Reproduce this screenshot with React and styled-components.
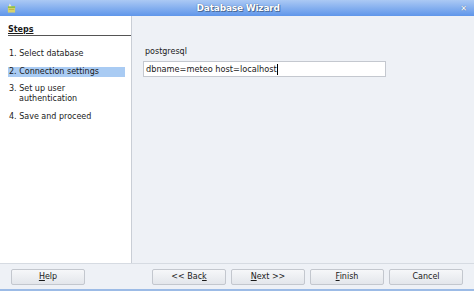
import React from 'react';
import styled, { createGlobalStyle } from 'styled-components';

const GlobalStyle = createGlobalStyle`
  html, body {
    margin: 0;
    padding: 0;
    background: #eef1f6;
  }
  * {
    box-sizing: border-box;
  }
`;

const steps = [
  { id: 1, label: '1. Select database' },
  { id: 2, label: '2. Connection settings', active: true },
  { id: 3, label: '3. Set up user', more: 'authentication' },
  { id: 4, label: '4. Save and proceed' },
];

const App = () => {
  return (
    <>
      <GlobalStyle />
      <StWindow>
        <StTitleBar>
          <StAppIcon viewBox="0 0 10 11">
            <rect x="1" y="3" width="8" height="7" fill="#d9d36a" />
            <rect x="1" y="3" width="8" height="2" fill="#8fbf4a" />
            <path d="M3 0 L5 3 L2 3 Z" fill="#f4f0d0" />
            <rect x="2" y="6" width="6" height="1" fill="#b9b24a" />
          </StAppIcon>
          <StTitle>Database Wizard</StTitle>
          <StClose>✕</StClose>
        </StTitleBar>

        <StMain>
          <StSteps>
            <StStepsHead>Steps</StStepsHead>
            <StStepList>
              {steps.map(step => (
                <StStep key={step.id} $active={step.active}>
                  {step.label}
                  {step.more && <StStepMore>{step.more}</StStepMore>}
                </StStep>
              ))}
            </StStepList>
          </StSteps>

          <StPage>
            <StLabel>postgresql</StLabel>
            <StInput>
              dbname=meteo host=localhost
              <StCaret />
            </StInput>
          </StPage>
        </StMain>

        <StFooter>
          <StButton>
            <u>H</u>elp
          </StButton>
          <StButtonGroup>
            <StButton>
              &lt;&lt; Bac<u>k</u>
            </StButton>
            <StButton>
              <u>N</u>ext &gt;&gt;
            </StButton>
            <StButton>
              <u>F</u>inish
            </StButton>
            <StButton>Cancel</StButton>
          </StButtonGroup>
        </StFooter>
      </StWindow>
    </>
  );
};

export default App;

const StWindow = styled.div`
  width: 474px;
  height: 291px;
  display: flex;
  flex-direction: column;
  background: #eef1f6;
  font-family: 'DejaVu Sans', sans-serif;
  font-size: 8px;
  color: #1a1a1a;
  border-bottom: 2px solid #9cbbe6;
`;

const StTitleBar = styled.div`
  height: 16px;
  flex: none;
  display: flex;
  align-items: center;
  padding: 0 7px 0 7px;
  background: linear-gradient(#abc9f4, #5f96ea);
`;

const StAppIcon = styled.svg`
  width: 9px;
  height: 11px;
`;

const StTitle = styled.div`
  flex: 1;
  text-align: center;
  font-weight: bold;
  font-size: 9px;
  letter-spacing: -0.2px;
  color: #ffffff;
  text-shadow: 0 0 1px #33507a, 1px 1px 0 #4d6f9e;
`;

const StClose = styled.div`
  color: #ffffff;
  font-size: 8px;
  font-weight: bold;
  text-shadow: 0 0 1px #33507a;
`;

const StMain = styled.div`
  flex: 1;
  display: flex;
  border-bottom: 1px solid #d6dbe2;
`;

const StSteps = styled.div`
  width: 132px;
  flex: none;
  background: #ffffff;
  border-right: 1px solid #c9ced6;
  padding: 9px 0 0 8px;
`;

const StStepsHead = styled.div`
  font-weight: bold;
  text-decoration: underline;
  border-bottom: 1px solid #555555;
  line-height: 10px;
  margin-bottom: 13px;
`;

const StStepList = styled.div`
  display: flex;
  flex-direction: column;
  gap: 7.5px;
`;

const StStep = styled.div`
  width: 117px;
  line-height: 10px;
  padding-left: 1px;
  background: ${props => (props.$active ? '#a9cbf3' : 'transparent')};
`;

const StStepMore = styled.div`
  padding-left: 10px;
`;

const StPage = styled.div`
  flex: 1;
  padding: 30px 0 0 11px;
`;

const StLabel = styled.div`
  padding-left: 2px;
  line-height: 12px;
  margin-bottom: 3px;
`;

const StInput = styled.div`
  width: 243px;
  height: 16px;
  background: #ffffff;
  border: 1px solid #c4c8cf;
  display: flex;
  align-items: center;
  padding-left: 2px;
  font-size: 8.2px;
`;

const StCaret = styled.span`
  width: 1px;
  height: 11px;
  background: #000000;
`;

const StFooter = styled.div`
  height: 25px;
  flex: none;
  display: flex;
  justify-content: space-between;
  align-items: center;
  padding: 0 11px 0 11px;
`;

const StButtonGroup = styled.div`
  display: flex;
  gap: 5px;
`;

const StButton = styled.button`
  width: 74px;
  height: 16px;
  padding: 0;
  font-family: 'DejaVu Sans', sans-serif;
  font-size: 8px;
  color: #1a1a1a;
  border: 1px solid #c3c7ce;
  border-radius: 2px;
  background: linear-gradient(#f6f7f9, #e3e6eb);
`;
